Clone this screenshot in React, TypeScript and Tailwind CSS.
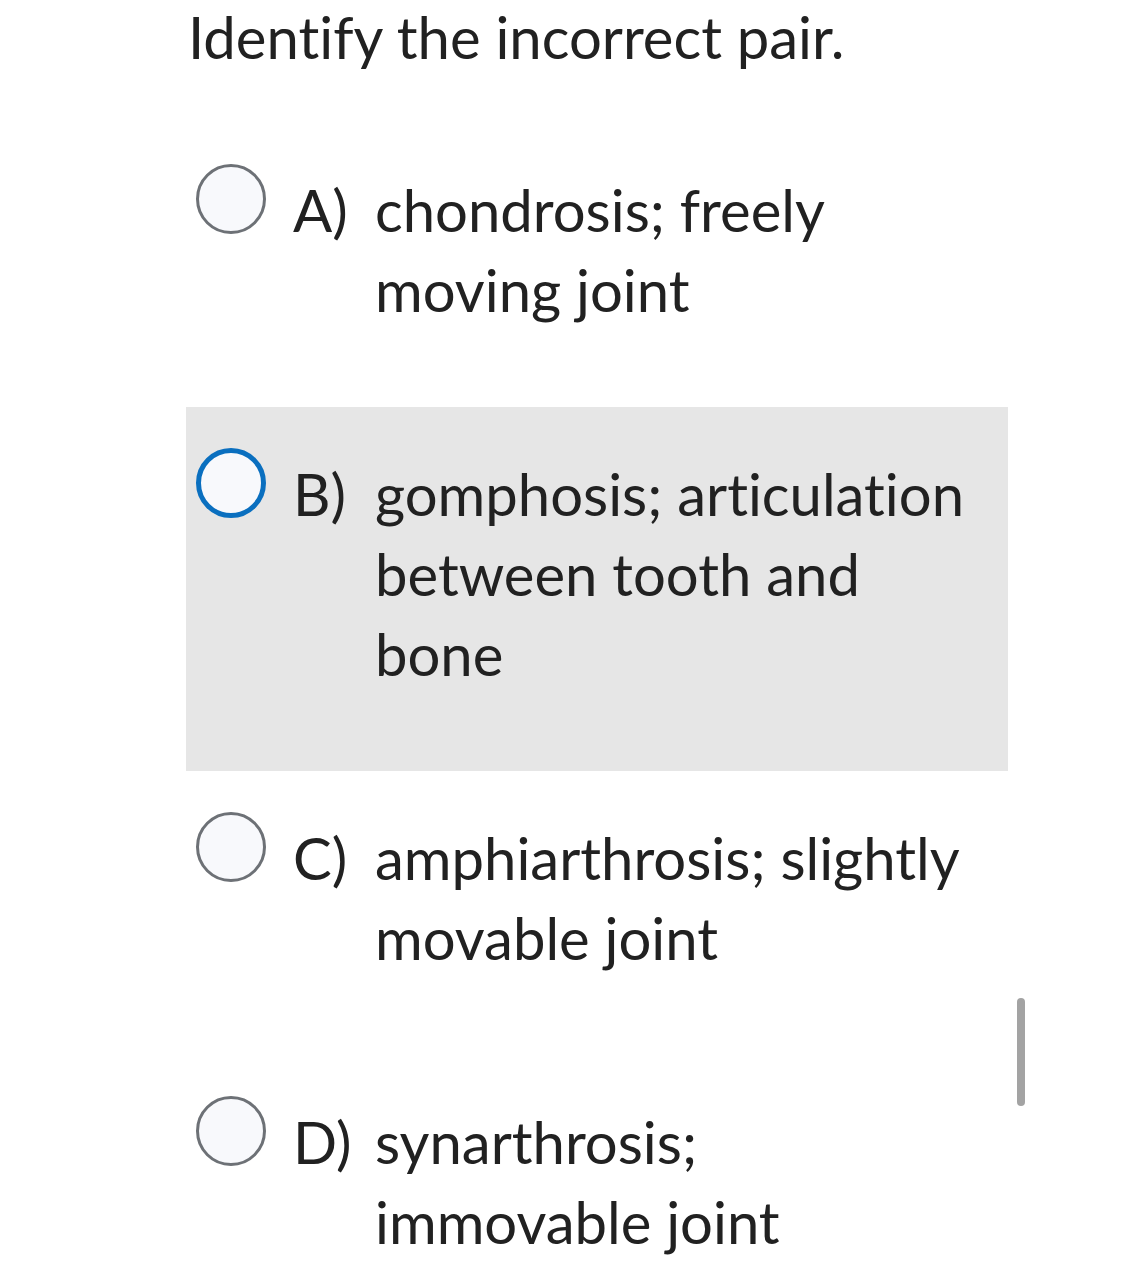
import React from "react";

const options = [
  { label: "A)", lines: ["chondrosis; freely", "moving joint"] },
  { label: "B)", lines: ["gomphosis; articulation", "between tooth and", "bone"], active: true },
  { label: "C)", lines: ["amphiarthrosis; slightly", "movable joint"] },
  { label: "D)", lines: ["synarthrosis;", "immovable joint"] },
];

export default function App() {
  return (
    <div
      className="relative h-[1272px] w-[1125px] overflow-hidden bg-white text-[#212121] [font-variant-ligatures:none]"
      style={{ fontFamily: "Lato, 'Noto Sans', sans-serif" }}
    >
      <div className="w-[822px] ml-[186px] pt-px">
        {/* Question */}
        <h1 className="text-[58px] leading-[72px] font-normal pl-[2px] mb-[50px]">
          Identify the incorrect pair.
        </h1>

        {/* Answers */}
        {options.map((opt) => (
          <div
            key={opt.label}
            className={
              "flex items-start pl-[10px] pt-[47px] pb-[77px] " +
              (opt.active ? "bg-[#e6e6e6]" : "")
            }
          >
            <span
              className={
                "mt-[-6px] w-[70px] h-[70px] shrink-0 rounded-full bg-[#f8f9fc] " +
                (opt.active ? "border-[5px] border-[#0a6fbf]" : "border-[3px] border-[#6d7176]")
              }
            />
            <div className="flex text-[58px] leading-[80px] ml-[27px]">
              <span className="w-[82px] shrink-0">{opt.label}</span>
              <div>
                {opt.lines.map((l) => (
                  <div key={l}>{l}</div>
                ))}
              </div>
            </div>
          </div>
        ))}
      </div>

      {/* scroll thumb */}
      <div className="absolute left-[1017px] top-[998px] w-[8px] h-[108px] rounded-full bg-[#a3a3a3]" />
    </div>
  );
}
